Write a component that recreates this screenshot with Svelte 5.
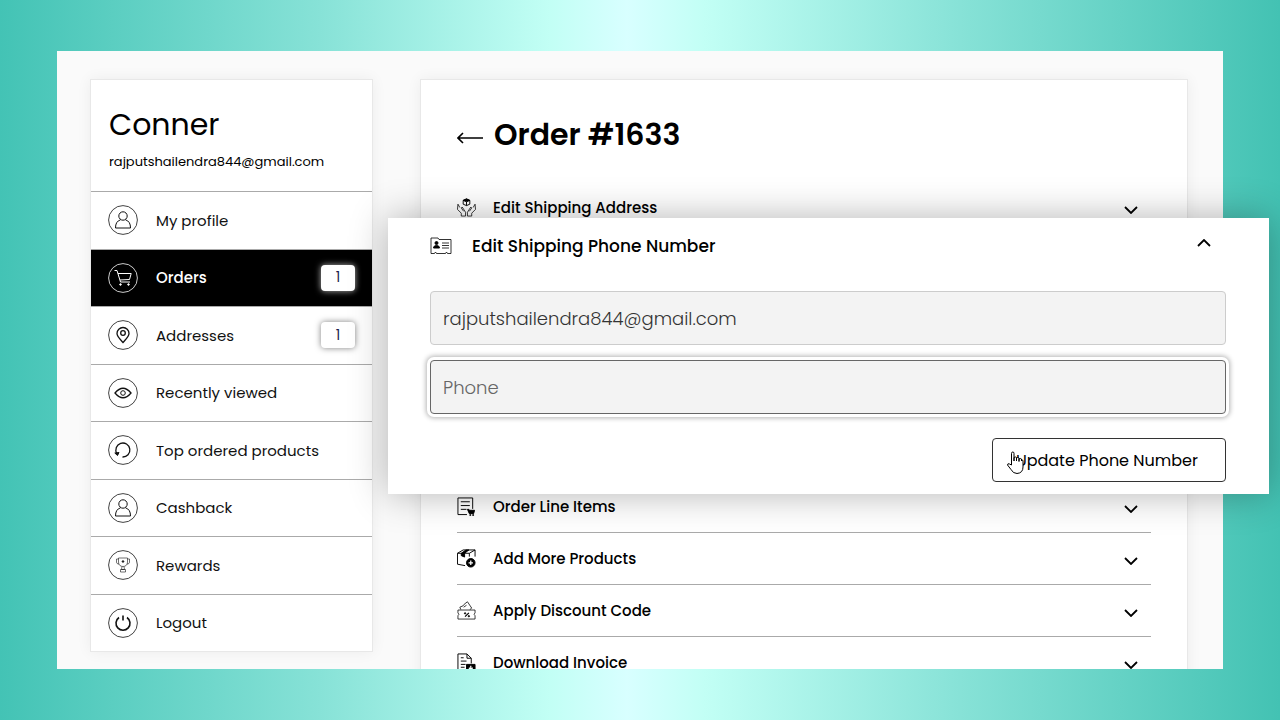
<script>
	const menu = [
		{ label: 'My profile', icon: 'user' },
		{ label: 'Orders', icon: 'cart', count: 1, active: true },
		{ label: 'Addresses', icon: 'pin', count: 1 },
		{ label: 'Recently viewed', icon: 'eye' },
		{ label: 'Top ordered products', icon: 'reorder' },
		{ label: 'Cashback', icon: 'user' },
		{ label: 'Rewards', icon: 'trophy' },
		{ label: 'Logout', icon: 'power' }
	];

	const sections = [
		{ label: 'Edit Shipping Address', icon: 'hands' },
		{ open: true },
		{ label: 'Order Line Items', icon: 'list' },
		{ label: 'Add More Products', icon: 'box' },
		{ label: 'Apply Discount Code', icon: 'coupon' },
		{ label: 'Download Invoice', icon: 'invoice' }
	];

	let email = $state('rajputshailendra844@gmail.com');
	let phone = $state('');
</script>

{#snippet menuIcon(name)}
	<svg class="menu-icon" viewBox="0 0 30 30" aria-hidden="true">
		<circle class="fine" cx="15" cy="15" r="14.4" />
		{#if name === 'user'}
			<circle cx="15" cy="11" r="4.2" />
			<path d="M12.500 14.800C9 16 7.500 18.500 7.500 23h15c0-4.500-1.500-7-5-8.200" />
		{:else if name === 'cart'}
			<path d="M6.500 7.500H9l3.500 11.500h9.500M10 10.500h13.200l-1.700 6-9.500.5" />
			<circle class="solid" cx="12.500" cy="21.500" r=".8" />
			<circle class="solid" cx="20.500" cy="21.500" r=".8" />
		{:else if name === 'pin'}
			<path class="medium" d="M15 22.500c-2.500-3-6-6-6-9a6 6 0 0 1 12 0c0 3-3.500 6-6 9z" />
			<circle class="medium" cx="15" cy="13" r="2.300" />
		{:else if name === 'eye'}
			<path class="medium" d="M7 15q8-9.500 16 0-8 9.500-16 0z" />
			<circle cx="15" cy="15" r="2.300" />
		{:else if name === 'reorder'}
			<path class="medium" d="M8.800 18.500A7 7 0 1 1 14.500 22" />
			<path class="solid" d="M6.800 18l4.200-.5-1.500 3z" />
		{:else if name === 'trophy'}
			<g class="thin">
				<path d="M10.500 8h9v4c0 3-2 4.500-4.500 4.500s-4.500-1.500-4.500-4.500zM10.500 9h-2v3c0 1.500 1 2 2.500 2M19.500 9h2v3c0 1.500-1 2-2.500 2M14 16.500l-.5 3h3l-.5-3M12.500 19.500h5v2.500h-5z" />
			</g>
			<circle class="solid" cx="15" cy="11.500" r=".8" />
		{:else}
			<path class="bold" d="M11 9.500a7 7 0 1 0 8 0M15 7.500v5" />
		{/if}
	</svg>
{/snippet}

{#snippet sectionIcon(name)}
	<svg class="section-icon" viewBox="0 0 20 20" aria-hidden="true">
		{#if name === 'hands'}
			<path d="M6.500 2.500L10 1l3.500 1.500v4L10 8 6.500 6.500zM10 4v4" />
			<path class="solid" d="M6.500 2.500L10 1l3.500 1.500L10 4z" />
			<path class="fine" d="M3 10L1 6.500.5 12l4 4v3H9v-4L5.500 9.500l-1 1L7 14M17 10l2-3.500.5 5.500-4 4v3H11v-4l3.500-5.500 1 1L13 14" />
		{:else if name === 'list'}
			<path d="M10.500 18.500H1V1h15.500v11.500M4 5h9.500M4 9h9.500M4 13h6" />
			<path class="solid" d="M11 13h1.500l.5 1h5.500l-1 3.500H13z" />
			<circle class="solid" cx="14" cy="19" r=".6" />
			<circle class="solid" cx="17" cy="19" r=".6" />
		{:else if name === 'box'}
			<path d="M8.500 17.500L.5 16V4.500l6-3.500H19v7M.5 4.500H13L19 1M13 4.500V8" />
			<path class="solid" d="M4.500 4.500l5-3.500h3L8 4.500v4L4.500 7z" />
			<circle class="solid" cx="14.500" cy="14.500" r="4.500" />
			<path class="light" d="M14.500 12.200v4.600M12.200 14.500h4.600" />
		{:else if name === 'coupon'}
			<path class="fine" d="M1 9.500h18v3q-2 1.500 0 3V19H1v-3.500q2-1.500 0-3zM4 9L3 6.500 6.500 5l1-1.500L11 .8l4.500 6.700-2 1.500M7 6.500l3-2" />
			<path class="medium" d="M8.500 16.500l4-4" />
			<circle class="solid" cx="8.500" cy="13" r=".7" />
			<circle class="solid" cx="12.500" cy="16" r=".7" />
		{:else}
			<path d="M8 18.500H1V1h9.500l4.500 4.500V11M10.500 1v4.500H15M4 5h3M4 8.500h6M4 12h5M4 15h4" />
			<path class="solid" d="M10 12h9v7h-9z" />
			<path class="light" d="M14.500 13.500v4M12.500 15.500l2 2 2-2" />
		{/if}
	</svg>
{/snippet}

<div class="stage">
	<div class="account">
		<aside class="sidebar">
			<header class="customer">
				<h2>Conner</h2>
				<p>rajputshailendra844@gmail.com</p>
			</header>
			<nav>
				{#each menu as item}
					<a href="#{item.icon}" class:active={item.active}>
						{@render menuIcon(item.icon)}
						<span>{item.label}</span>
						{#if item.count}
							<b class="count">{item.count}</b>
						{/if}
					</a>
				{/each}
			</nav>
		</aside>

		<main class="order">
			<div class="order-title">
				<a href="#orders" aria-label="Back to orders">
					<svg viewBox="0 0 26 12" aria-hidden="true"><path d="M26 6H1M6 1L1 6l5 5" /></svg>
				</a>
				<h1>Order #1633</h1>
			</div>
			{#each sections as section}
				{#if section.open}
					<div class="section-open"></div>
				{:else}
					<button class="section">
						{@render sectionIcon(section.icon)}
						<span>{section.label}</span>
						<svg class="chevron" viewBox="0 0 14 8" aria-hidden="true"><path d="M1 1l6 6 6-6" /></svg>
					</button>
				{/if}
			{/each}
		</main>
	</div>

	<form class="phone-card" onsubmit={(e) => e.preventDefault()}>
		<button type="button" class="phone-head">
			<svg class="card-icon" viewBox="0 0 22 18" aria-hidden="true">
				<path class="fine" d="M1 1h7l1 1.500h12v14h-3.500l-1-1.500-1 1.500h-9l-1-1.500-1 1.500H1zM12 6h7M12 8.500h7M12 11h7" />
				<circle class="solid" cx="6.500" cy="6" r="1.500" />
				<path class="solid" d="M3.500 11q0-2.500 3-2.500t3 2.500z" />
			</svg>
			<span>Edit Shipping Phone Number</span>
			<svg class="chevron" viewBox="0 0 14 8" aria-hidden="true"><path d="M1 7l6-6 6 6" /></svg>
		</button>
		<input type="email" aria-label="Email" bind:value={email} />
		<input type="tel" class="focused" aria-label="Phone" placeholder="Phone" bind:value={phone} />
		<button class="update">
			Update Phone Number
			<svg class="pointer" viewBox="0 0 18 24" aria-hidden="true">
				<path d="M5.500 14V2.500q0-1.500 1.300-1.500T8 2.500V10V6.500q1.200-1.200 2.500 0V10V7q1.200-1 2.500 0v3.500V8q1.200-1 2.500 0v2V9q1.500-.5 1.500 1v6q0 6-6 6.500-4 0-6-4L1.500 14q0-2 2-1z" />
			</svg>
		</button>
	</form>
</div>

<style>
	:global(body) {
		margin: 0;
	}

	.stage {
		position: relative;
		box-sizing: border-box;
		height: 100vh;
		padding: 51px 57px;
		background: linear-gradient(90deg, #43c3b5 0%, #87e2d7 25%, #c2fff5 43%, #d8ffff 49%, #c2fff5 55%, #87e2d7 75%, #43c2b3 100%);
		color: #000;
		font-family: Poppins, Inter, sans-serif;
	}
	.stage :global(*) {
		box-sizing: border-box;
	}

	svg {
		flex: none;
		fill: none;
		stroke: currentColor;
		stroke-width: 1;
	}
	.solid {
		fill: currentColor;
	}
	.bold {
		stroke-width: 1.600;
	}
	.medium {
		stroke-width: 1.300;
	}
	.fine {
		stroke-width: .8;
	}
	.thin {
		stroke-width: .6;
	}
	.light {
		stroke: #fff;
		stroke-width: 1.300;
	}

	button {
		font-family: inherit;
		color: inherit;
		cursor: pointer;
	}

	.account {
		display: grid;
		grid-template-columns: 283px 1fr;
		gap: 47px;
		align-items: start;
		height: 100%;
		padding: 28px 35px 0 33px;
		overflow: hidden;
		background: #fafafa;
	}

	.sidebar,
	.order {
		background: #fff;
		border: 1px solid #e8e8e8;
		box-shadow: 0 0 14px rgba(0, 0, 0, .06);
	}

	.customer {
		height: 111px;
		padding: 24px 18px 0;
	}
	.customer h2 {
		margin: 0;
		font-size: 30px;
		font-weight: 400;
		line-height: 42px;
	}
	.customer p {
		margin: 6px 0 0;
		font-size: 13px;
		line-height: 20px;
	}

	nav {
		display: grid;
		grid-auto-rows: 1fr;
		height: 460px;
	}
	nav a {
		display: flex;
		align-items: center;
		gap: 18px;
		padding: 0 17px;
		border-top: 1px solid #aaa;
		color: #111;
		font-size: 15px;
		text-decoration: none;
	}
	nav a.active {
		background: #000;
		color: #fff;
		font-weight: 500;
	}
	.menu-icon {
		width: 30px;
		height: 30px;
	}
	.count {
		display: grid;
		place-items: center;
		width: 34px;
		height: 26px;
		margin-left: auto;
		border-radius: 4px;
		background: #fff;
		box-shadow: 0 0 6px rgba(0, 0, 0, .5);
		color: #1c1c4c;
		font-size: 14px;
		font-weight: 400;
	}
	.active .count {
		box-shadow: 0 0 6px rgba(255, 255, 255, .7);
	}

	.order {
		padding: 0 36px;
	}
	.order-title {
		display: flex;
		align-items: center;
		gap: 11px;
		padding: 33px 0 25px;
	}
	.order-title a {
		display: flex;
		padding-top: 6px;
		color: #000;
	}
	.order-title svg {
		width: 26px;
		height: 12px;
		stroke-width: 1.600;
	}
	.order-title h1 {
		margin: 0;
		font-size: 30px;
		font-weight: 600;
		line-height: 44px;
	}

	.section {
		display: flex;
		align-items: center;
		gap: 17px;
		width: 100%;
		height: 52px;
		padding: 0 13px 0 0;
		border: 0;
		border-bottom: 1px solid #aaa;
		background: none;
		font-size: 15px;
		font-weight: 500;
	}
	.section-icon {
		width: 19px;
		height: 19px;
	}
	.section-open {
		height: 247px;
	}
	.chevron {
		width: 14px;
		height: 8px;
		margin-top: 5px;
		margin-left: auto;
		stroke-width: 1.800;
	}

	/* the open section is lifted above the page */
	.phone-card {
		position: absolute;
		top: 218px;
		left: 388px;
		right: 11px;
		display: flex;
		flex-direction: column;
		padding: 0 43px 12px 42px;
		background: #fff;
		box-shadow: 0 0 36px rgba(0, 0, 0, .3);
	}
	.phone-head {
		display: flex;
		align-items: center;
		gap: 20px;
		height: 56px;
		margin-bottom: 17px;
		padding: 0 15px 0 0;
		border: 0;
		background: none;
		font-size: 17px;
		font-weight: 500;
	}
	.phone-head .chevron {
		margin-top: 0;
		margin-bottom: 6px;
	}
	.card-icon {
		width: 22px;
		height: 18px;
	}
	.phone-card input {
		width: 100%;
		height: 54px;
		margin-bottom: 15px;
		padding: 0 12px;
		border: 1px solid #ccc;
		border-radius: 4px;
		outline: 0;
		background: #f3f3f3;
		color: #333;
		font-family: inherit;
		font-size: 18px;
		font-weight: 300;
	}
	.phone-card input::placeholder {
		color: #666;
	}
	.phone-card input.focused {
		margin-bottom: 24px;
		border-color: #666;
		box-shadow: 0 0 0 3px #fff, 0 0 5px 4px rgba(0, 0, 0, .3);
	}
	.update {
		position: relative;
		align-self: flex-end;
		height: 44px;
		padding: 0 27px 0 23px;
		border: 1px solid #333;
		border-radius: 4px;
		background: #fff;
		font-size: 16px;
	}
	.pointer {
		position: absolute;
		top: 12px;
		left: 13px;
		width: 18px;
		height: 24px;
	}
	.pointer path {
		fill: #fff;
	}
</style>
